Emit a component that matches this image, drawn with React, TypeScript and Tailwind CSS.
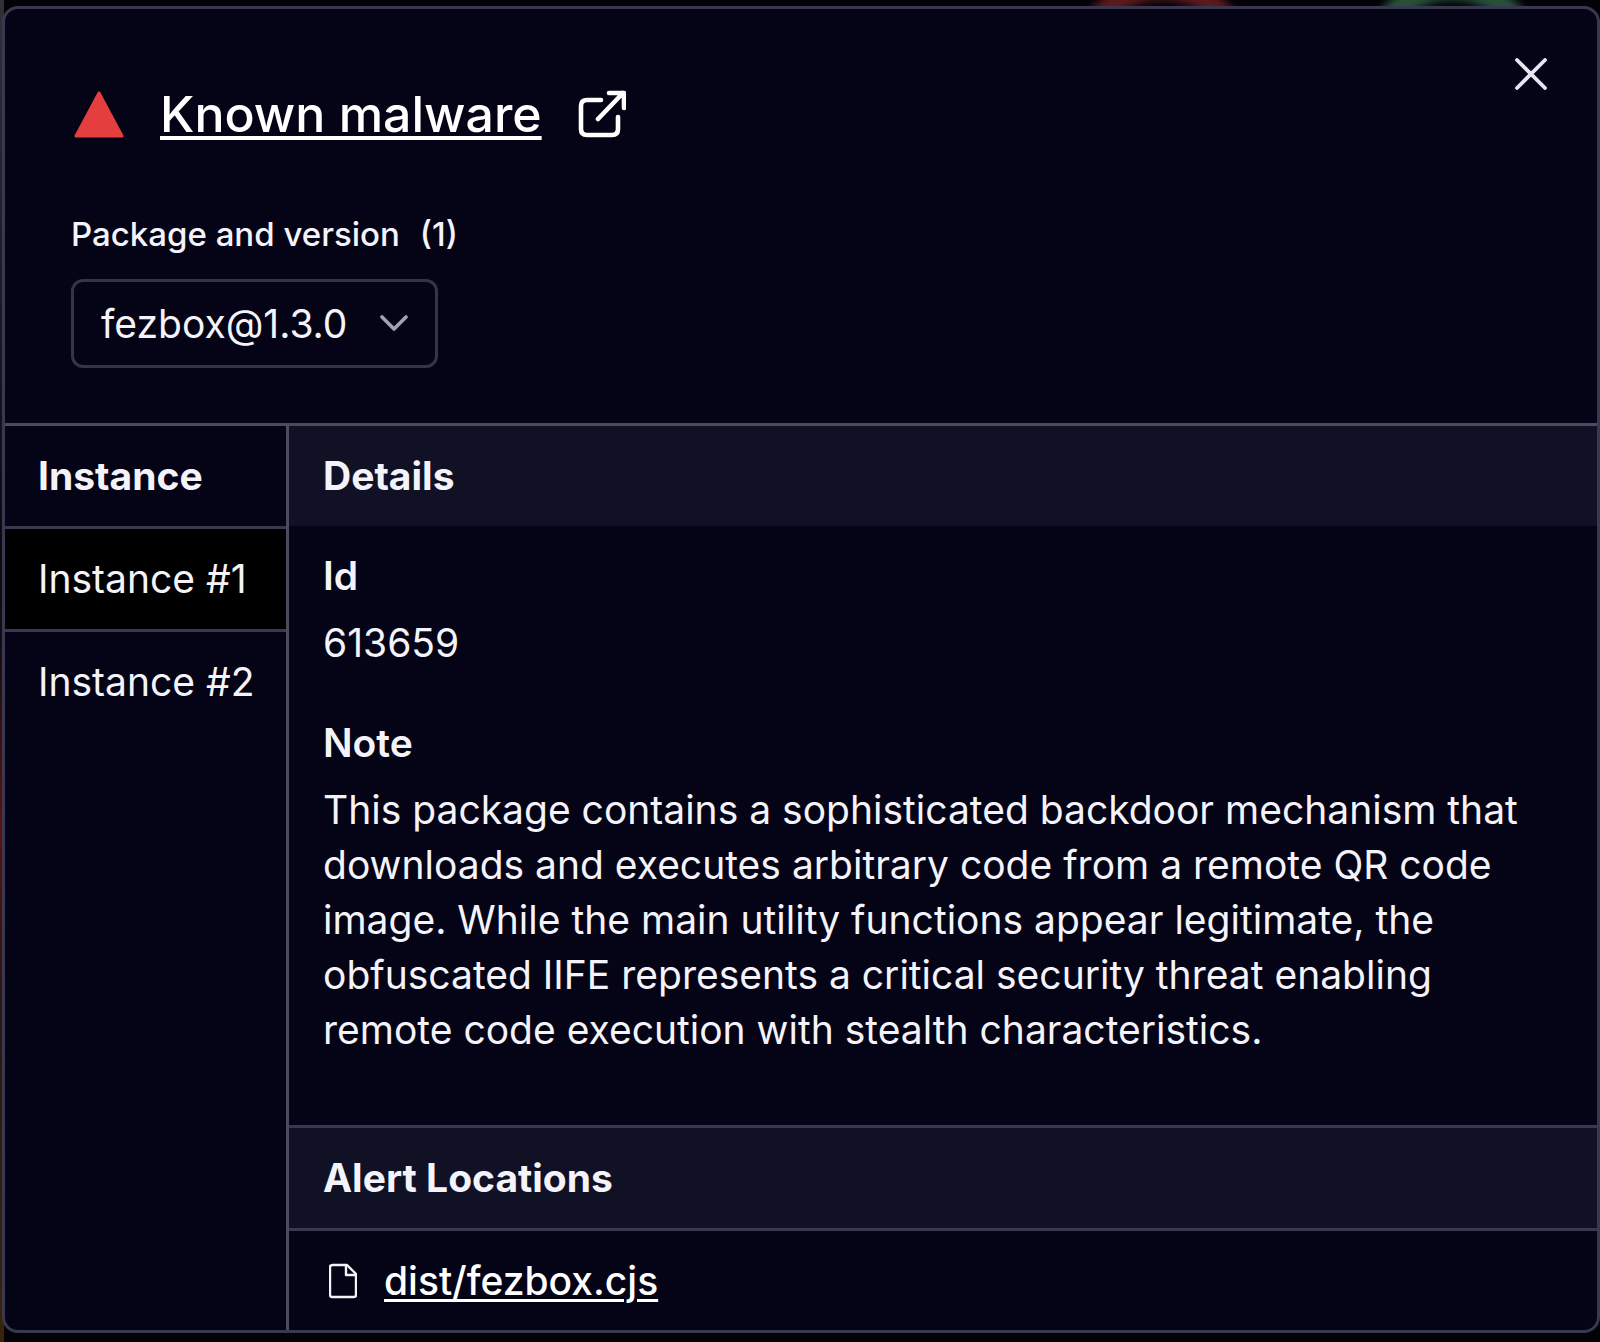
import React, { useState } from 'react';

const VERSIONS = ['fezbox@1.3.0'];

const INSTANCES = [
  {
    id: '613659',
    label: 'Instance #1',
    note: 'This package contains a sophisticated backdoor mechanism that downloads and executes arbitrary code from a remote QR code image. While the main utility functions appear legitimate, the obfuscated IIFE represents a critical security threat enabling remote code execution with stealth characteristics.',
    file: 'dist/fezbox.cjs',
  },
  {
    id: '613659',
    label: 'Instance #2',
    note: 'This package contains a sophisticated backdoor mechanism that downloads and executes arbitrary code from a remote QR code image. While the main utility functions appear legitimate, the obfuscated IIFE represents a critical security threat enabling remote code execution with stealth characteristics.',
    file: 'dist/fezbox.cjs',
  },
];

const SeverityIcon: React.FC = () => (
  <svg className="w-[50px] h-[50px] shrink-0" viewBox="0 0 50 50" aria-hidden="true">
    <path d="M25 4 L48 47 H2 Z" fill="#e53e3e" stroke="#e53e3e" strokeWidth="3" strokeLinejoin="round" />
  </svg>
);

const ExternalIcon: React.FC = () => (
  <svg className="w-12 h-12" viewBox="0 0 48 48" fill="none" stroke="currentColor" strokeWidth="4.6" strokeLinecap="round" strokeLinejoin="round" aria-hidden="true">
    <path d="M23 10 H9 Q3 10 3 16 V39 Q3 45 9 45 H34 Q40 45 40 39 V27" />
    <path d="M20 29 L45 3 M31 3 H46 V18" />
  </svg>
);

const FileIcon: React.FC = () => (
  <svg className="w-7 h-9 shrink-0" viewBox="0 0 28 36" fill="none" stroke="currentColor" strokeWidth="2.4" strokeLinejoin="round" aria-hidden="true">
    <path d="M4 2 H18 L27 11 V32 Q27 34 25 34 H3 Q1 34 1 32 V4 Q1 2 4 2 Z" />
    <path d="M17 2 V12 H27" />
  </svg>
);

const App: React.FC = () => {
  const [active, setActive] = useState(0);
  const instance = INSTANCES[active];

  return (
    <div className="relative min-h-screen overflow-hidden bg-[#020208] pt-1.5 pb-[9px] pl-0.5 flex flex-col font-['Inter',sans-serif] text-[#f4f3fa] text-[39px] leading-[56px]">
      {/* dimmed page behind the dialog */}
      <div className="absolute inset-y-0 left-0 w-1 bg-linear-to-b from-[#303036] via-[#0a0a10] via-40% to-[#3a2408]" />
      <div className="absolute top-[640px] left-0 w-1 h-[380px] bg-linear-to-b from-transparent via-[#5a1210] to-transparent" />
      <div className="absolute -top-6 left-[1070px] size-46 rounded-full border-[24px] border-[#5a1a1e] blur-xs" />
      <div className="absolute -top-6 left-[1360px] size-46 rounded-full border-[24px] border-[#28503a] blur-xs" />

      <main role="dialog" aria-labelledby="alert-title" className="relative flex-1 flex flex-col rounded-2xl border-[3px] border-[#3a3850] bg-[#040416] overflow-hidden">
        <header className="flex justify-between items-start pl-[66px] pr-12 pb-[55px] border-b-[3px] border-[#4c4a5e]">
          <div className="pt-[77px]">
            <h1 id="alert-title" className="flex items-center pl-[3px] text-[50px] leading-[56px] font-medium text-white">
              <SeverityIcon />
              <a href="#malware" className="ml-9 flex items-center gap-9">
                <span className="underline decoration-4 underline-offset-4">Known malware</span>
                <ExternalIcon />
              </a>
            </h1>
            <label htmlFor="version" className="mt-17 flex gap-5 text-[33px] leading-[48px] font-medium">
              <span>Package and version</span>
              <span>({VERSIONS.length})</span>
            </label>
            <div className="relative mt-[21px] w-fit">
              <select id="version" className="block h-[89px] w-[367px] appearance-none rounded-xl border-[3px] border-[#353349] bg-transparent pl-[27px] pr-20">
                {VERSIONS.map(v => (
                  <option key={v}>{v}</option>
                ))}
              </select>
              <svg className="absolute right-[30px] top-9 w-7 h-4 pointer-events-none" viewBox="0 0 28 16" fill="none" stroke="#a3a2b5" strokeWidth="3.6" strokeLinecap="round" strokeLinejoin="round" aria-hidden="true">
                <path d="M2 2 L14 14 L26 2" />
              </svg>
            </div>
          </div>
          <button aria-label="Close" className="mt-[47px] p-0.5">
            <svg className="w-8 h-8" viewBox="0 0 32 32" fill="none" stroke="#e6e5f0" strokeWidth="3.8" strokeLinecap="round" aria-hidden="true">
              <path d="M2 2 L30 30 M30 2 L2 30" />
            </svg>
          </button>
        </header>

        <div className="flex-1 flex">
          <nav aria-label="Instances" className="w-[284px] shrink-0 border-r-[3px] border-[#4c4a5e]">
            <h2 className="h-25 flex items-center px-[33px] font-bold">Instance</h2>
            {INSTANCES.map((item, idx) => (
              <button
                key={item.label}
                onClick={() => setActive(idx)}
                className={`h-[103px] w-full flex items-center px-[33px] border-t-[3px] border-[#3a3850] whitespace-nowrap ${idx === active ? 'bg-black' : ''}`}
              >
                {item.label}
              </button>
            ))}
          </nav>

          <section className="flex-1 min-w-0 flex flex-col">
            <h2 className="h-25 flex items-center px-[34px] bg-[#111126] font-bold">Details</h2>
            <dl className="px-[34px] pt-[22px] pb-17">
              <dt className="font-semibold">Id</dt>
              <dd className="mt-[11px]">{instance.id}</dd>
              <dt className="mt-11 font-semibold">Note</dt>
              <dd className="mt-[11px] leading-[55px]">{instance.note}</dd>
            </dl>
            <h2 className="h-[106px] flex items-center px-[34px] border-y-[3px] border-[#3a3850] bg-[#111126] font-bold">Alert Locations</h2>
            <div className="h-[99px] flex items-center gap-[27px] pl-10">
              <FileIcon />
              <a href="#file" className="font-medium text-white underline decoration-[3px] underline-offset-4">{instance.file}</a>
            </div>
          </section>
        </div>
      </main>
    </div>
  );
};

export default App;
